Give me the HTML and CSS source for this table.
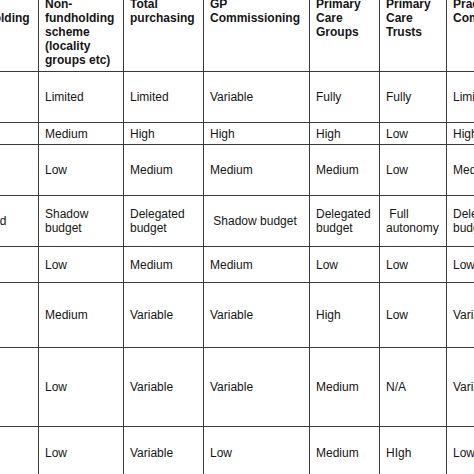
FILE: index.html
```html
<!DOCTYPE html>
<html>
<head>
<meta charset="utf-8">
<link rel="stylesheet" href="styles.css">
</head>
<body>
<div class="sheet">
  <div class="th">GP<br>Fundholding</div>
  <div class="th">Non-<br>fundholding<br>scheme<br>(locality<br>groups etc)</div>
  <div class="th">Total<br>purchasing</div>
  <div class="th">GP<br>Commissioning</div>
  <div class="th">Primary<br>Care<br>Groups</div>
  <div class="th">Primary<br>Care<br>Trusts</div>
  <div class="th">Practice<br>Commissioning</div>

  <div class="td"><span>High</span></div>
  <div class="td"><span>Limited</span></div>
  <div class="td"><span>Limited</span></div>
  <div class="td"><span>Variable</span></div>
  <div class="td"><span>Fully</span></div>
  <div class="td"><span>Fully</span></div>
  <div class="td"><span>Limited</span></div>

  <div class="td"><span>Low</span></div>
  <div class="td"><span>Medium</span></div>
  <div class="td"><span>High</span></div>
  <div class="td"><span>High</span></div>
  <div class="td"><span>High</span></div>
  <div class="td"><span>Low</span></div>
  <div class="td"><span>High</span></div>

  <div class="td"><span>Low</span></div>
  <div class="td"><span>Low</span></div>
  <div class="td"><span>Medium</span></div>
  <div class="td"><span>Medium</span></div>
  <div class="td"><span>Medium</span></div>
  <div class="td"><span>Low</span></div>
  <div class="td"><span>Medium</span></div>

  <div class="td"><span>Allocated</span></div>
  <div class="td"><span>Shadow<br>budget</span></div>
  <div class="td"><span>Delegated<br>budget</span></div>
  <div class="td"><span>&nbsp;Shadow budget</span></div>
  <div class="td"><span>Delegated<br>budget</span></div>
  <div class="td"><span>&nbsp;Full<br>autonomy</span></div>
  <div class="td"><span>Delegated<br>budget</span></div>

  <div class="td"><span>Low</span></div>
  <div class="td"><span>Low</span></div>
  <div class="td"><span>Medium</span></div>
  <div class="td"><span>Medium</span></div>
  <div class="td"><span>Low</span></div>
  <div class="td"><span>Low</span></div>
  <div class="td"><span>Low</span></div>

  <div class="td"><span>Low</span></div>
  <div class="td"><span>Medium</span></div>
  <div class="td"><span>Variable</span></div>
  <div class="td"><span>Variable</span></div>
  <div class="td"><span>High</span></div>
  <div class="td"><span>Low</span></div>
  <div class="td"><span>Variable</span></div>

  <div class="td"><span>Variable</span></div>
  <div class="td"><span>Low</span></div>
  <div class="td"><span>Variable</span></div>
  <div class="td"><span>Variable</span></div>
  <div class="td"><span>Medium</span></div>
  <div class="td"><span>N/A</span></div>
  <div class="td"><span>Variable</span></div>

  <div class="td"><span>Variable</span></div>
  <div class="td"><span>Low</span></div>
  <div class="td"><span>Variable</span></div>
  <div class="td"><span>Low</span></div>
  <div class="td"><span>Medium</span></div>
  <div class="td"><span>HIgh</span></div>
  <div class="td"><span>Low</span></div>
</div>
</body>
</html>
```
FILE: styles.css
```css
html, body {
  margin: 0;
  padding: 0;
  background: #ffffff;
  overflow: hidden;
  width: 474px;
  height: 474px;
}

.sheet {
  display: grid;
  grid-template-columns: 87px 84px 79px 105px 69px 66px 113px;
  grid-template-rows: 78px 50px 21px 50px 50px 35px 64px 78px 52px;
  gap: 1px;
  background: #3a3a3a;
  width: max-content;
  margin-top: -7px;
  margin-left: -49px;
  font-family: "Liberation Sans", Arial, sans-serif;
  font-size: 12px;
  line-height: 14px;
  color: #151515;
}

.th {
  background: #ffffff;
  font-weight: bold;
  padding: 4px 6px 0 6px;
  white-space: nowrap;
  overflow: hidden;
}

.td {
  background: #ffffff;
  display: flex;
  align-items: center;
  padding: 0 6px;
  white-space: nowrap;
  overflow: hidden;
}
```
